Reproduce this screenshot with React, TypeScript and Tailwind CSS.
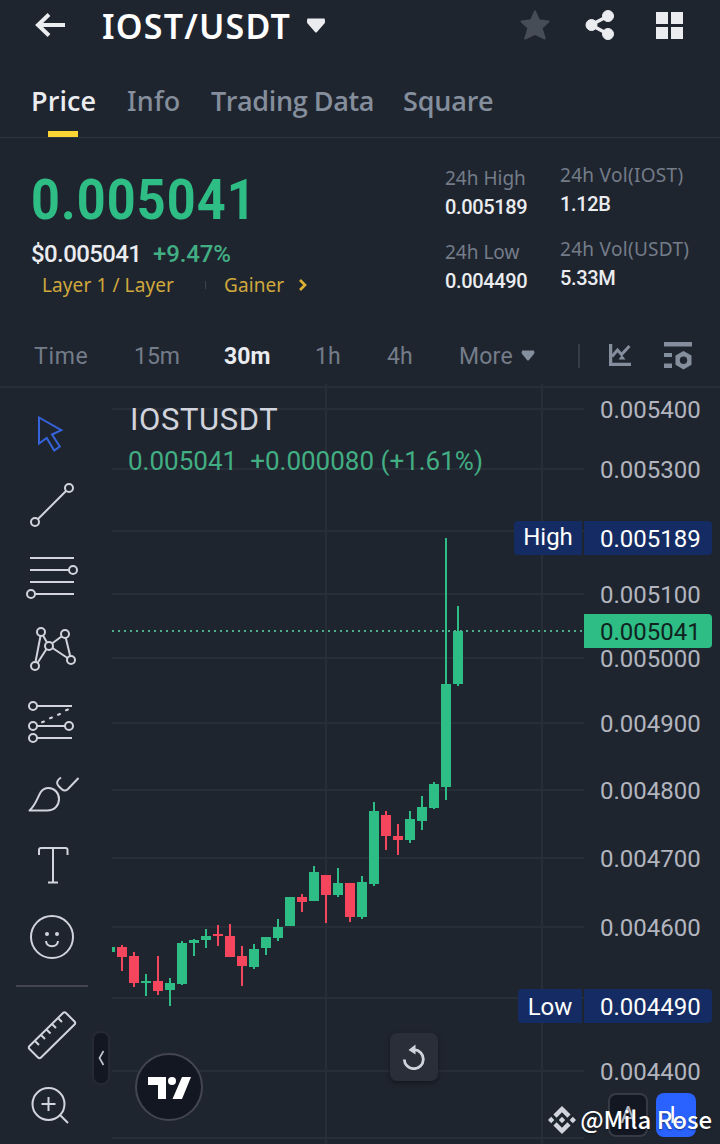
import type { ReactNode } from "react";
import { SiBinance } from "react-icons/si";

const GREEN = "#2ebd85";
const RED = "#f6465d";

// [center x, wick top, wick bottom, body top, body bottom, rising]
const candles: [number, number, number, number, number, boolean][] = [
  [110, 947, 952, 947, 952, true],
  [122, 945, 971, 947, 957, false],
  [134, 952, 987, 956, 983, false],
  [146, 974, 996, 981, 983, true],
  [158, 956, 995, 981, 991, false],
  [170, 978, 1006, 983, 990, true],
  [182, 941, 985, 943, 984, true],
  [194, 939, 956, 940, 943, true],
  [206, 929, 948, 936, 940, true],
  [218, 925, 946, 934, 936, false],
  [230, 924, 957, 936, 957, false],
  [242, 946, 986, 956, 966, false],
  [254, 944, 969, 949, 967, true],
  [266, 937, 955, 937, 948, true],
  [278, 919, 941, 927, 938, true],
  [290, 897, 926, 897, 926, true],
  [302, 894, 912, 897, 902, false],
  [314, 866, 901, 872, 901, true],
  [326, 875, 923, 875, 895, false],
  [338, 868, 897, 883, 895, true],
  [350, 883, 922, 883, 917, false],
  [362, 876, 919, 882, 917, true],
  [374, 802, 886, 811, 884, true],
  [386, 811, 850, 815, 836, false],
  [398, 824, 855, 836, 840, false],
  [410, 811, 843, 819, 840, true],
  [422, 796, 830, 807, 821, true],
  [434, 782, 809, 784, 808, true],
  [446, 538, 800, 684, 787, true],
  [458, 606, 686, 631, 684, true],
];

const gridLines = [409, 469, 531, 594, 658, 723, 790, 858, 927, 998, 1071, 1138];

const axisLabels: [string, number][] = [
  ["0.005400", 409],
  ["0.005300", 469],
  ["0.005100", 594],
  ["0.005000", 658],
  ["0.004900", 723],
  ["0.004800", 790],
  ["0.004700", 858],
  ["0.004600", 927],
  ["0.004400", 1071],
];

function Tool({ children, className = "text-[#d1d4dc]" }: { children: ReactNode; className?: string }) {
  return (
    <button className={`flex h-[72px] w-[104px] items-center justify-center ${className}`}>
      <svg
        viewBox="0 0 56 56"
        className="h-14 w-14"
        fill="none"
        stroke="currentColor"
        strokeWidth="2"
      >
        {children}
      </svg>
    </button>
  );
}

function Toolbar() {
  return (
    <div className="relative flex w-[112px] shrink-0 flex-col pt-[9px]">
      <Tool className="text-[#3564dc]">
        <path d="M15 12.500 37.300 25.200 28 29.500l7.800 12-5.600 4-7.500-12.500L15 38.500Z" />
      </Tool>
      <Tool>
        <path d="M14 42 42 14" />
        <circle cx="45" cy="11" r="4" />
        <circle cx="11" cy="45" r="4" />
      </Tool>
      <Tool>
        <path d="M6 9h44M6 21h39M6 33h44M11 45h39" />
        <circle cx="49" cy="21" r="4" />
        <circle cx="7" cy="45" r="4" />
      </Tool>
      <Tool>
        <path d="m19 14.500 4 7M28 22.500l9.500-7M16.500 15l-5 26M13.500 42l9-14M28.500 27l15 10M41.800 17l4.400 18" />
        <circle cx="17" cy="11" r="4" />
        <circle cx="41" cy="13" r="4" />
        <circle cx="25" cy="25" r="4" />
        <circle cx="11" cy="45" r="4" />
        <circle cx="47" cy="39" r="4" />
      </Tool>
      <Tool>
        <path d="M13 13h35M13 33h28M13 45h35" />
        <circle cx="9" cy="13" r="4" />
        <circle cx="9" cy="33" r="4" />
        <circle cx="45" cy="33" r="4" />
        <circle cx="9" cy="45" r="4" />
        <path d="M18 29.300l2-.8M26 25.300l2-.8M34 21.800l2-.8M42 17.300l2-.8" strokeLinecap="round" />
      </Tool>
      <Tool>
        <path d="M5.500 45.500c6.500-6 7.500-12 11-18 2-3.200 5-4.500 8-4.500 6 0 10.500 5 10.500 11s-4 11.500-12 11.500Z" strokeLinejoin="round" />
        <path d="M37 12.500c-4.200 2.700-5 6-2.500 8.500l3.500 3.400c2 1.600 3.500 1.600 5.500.1L54.500 13" />
      </Tool>
      <Tool>
        <path d="M15 18v-5q0-2 2-2h24.500q2 0 2 2v5M29 11v34M24 45.500h10" />
      </Tool>
      <Tool>
        <circle cx="28" cy="28" r="21" />
        <circle cx="23" cy="25" r="2" fill="currentColor" stroke="none" />
        <circle cx="33" cy="25" r="2" fill="currentColor" stroke="none" />
        <path d="M22 32c.8 7 11.200 7 12 0" />
      </Tool>
      <div className="flex h-[25px] items-center pt-px pl-4">
        <div className="h-0.5 w-[72px] bg-[#434651]" />
      </div>
      <Tool>
        <path
          d="M39 7q1.500-1.500 3 0L50.500 15.500q1.500 1.500 0 3L17 51.500q-1.500 1.500-3 0L5.500 43q-1.500-1.500 0-3ZM11 35l4 4M17 29l4 4M22.500 23.500l4 4M28 18l4 4M34 12l4 4"
          strokeLinejoin="round"
        />
      </Tool>
      <Tool>
        <circle cx="24.500" cy="26" r="16" />
        <path d="M17.500 26h14M24.500 19v14M36 37l8 8" />
      </Tool>
      <button className="absolute top-[643px] left-[92px] flex h-[54px] w-[18px] items-center justify-center rounded-[8px] border-2 border-[#252a35] bg-[#131722]">
        <svg viewBox="0 0 8 16" className="h-4 w-2" fill="none" stroke="#c0c3cb" strokeWidth="1.700">
          <path d="M6.500 1 2.500 8l4 7" />
        </svg>
      </button>
    </div>
  );
}

function Plot() {
  return (
    <div className="relative h-[756px] w-[472px] shrink-0 font-[Roboto,sans-serif]">
      <svg viewBox="112 388 472 756" className="block h-[756px] w-[472px] overflow-visible" shapeRendering="crispEdges">
        {gridLines.map((y) => (
          <rect key={y} x="112" y={y - 1} width="472" height="2" fill="#282e38" />
        ))}
        <rect x="325" y="384" width="2" height="760" fill="#282e38" />
        <rect x="541" y="384" width="2" height="760" fill="#282e38" />
        {candles.map(([x, wt, wb, bt, bb, up]) => {
          const left = Math.max(x - 5, 112);
          return (
            <g key={x} fill={up ? GREEN : RED}>
              {x > 112 && <rect x={x - 1} y={wt} width="2" height={wb - wt} />}
              <rect x={left} y={bt} width={x + 5 - left} height={bb - bt} />
            </g>
          );
        })}
        <path d="M112 631H584" stroke="#4fae8c" strokeWidth="2" strokeDasharray="2 4" />
      </svg>
      <div className="absolute top-[14px] left-[18px] text-[31px] leading-9 tracking-[0.6px] whitespace-nowrap text-[#d1d4dc]">
        IOSTUSDT
      </div>
      <div className="absolute top-[58px] left-4 flex gap-[13px] text-[26px] leading-[30px] whitespace-nowrap text-[#42ae83]">
        <span>0.005041</span>
        <span>+0.000080 (+1.61%)</span>
      </div>
      <div className="absolute top-[133px] left-[402px] h-[34px] w-[68px] rounded-l-[4px] bg-[#142c63] text-center text-2xl leading-8 text-white">
        High
      </div>
      <div className="absolute top-[601px] left-[406px] h-[34px] w-[64px] rounded-l-[4px] bg-[#142c63] text-center text-2xl leading-[36px] text-white">
        Low
      </div>
      <button className="absolute top-[645px] left-[278px] flex h-12 w-12 items-center justify-center rounded-[7px] bg-[#2a2e39] shadow-[0_2px_5px_rgba(0,0,0,0.4)]">
        <svg viewBox="0 0 24 26" className="h-[26px] w-6" fill="none" stroke="#d1d4dc" strokeWidth="2.800">
          <path d="M2.300 15.500a9.500 9.500 0 1 0 10-9.800" />
          <path d="M6.500 6 13.500.5v10Z" fill="#d1d4dc" stroke="none" />
        </svg>
      </button>
      <div className="absolute top-[665px] left-[23px] h-[68px] w-[68px] rounded-full border-2 border-[#434651] bg-[#131722]">
        <svg viewBox="137 1055 64 64" className="h-16 w-16" fill="#fff">
          <path d="M148 1077h18v22h-8v-14h-10ZM182 1077h9l-9 22h-9.500Z" />
          <circle cx="172" cy="1081" r="4" />
        </svg>
      </div>
    </div>
  );
}

function PriceAxis() {
  return (
    <div className="relative h-[756px] w-[136px] shrink-0 font-[Roboto,sans-serif] text-2xl">
      {axisLabels.map(([label, y]) => (
        <div key={label} className="absolute left-4 leading-8 text-[#b2b5be]" style={{ top: y - 388 - 15 }}>
          {label}
        </div>
      ))}
      <div className="absolute top-[133px] left-0 h-[34px] w-32 rounded-r-[4px] bg-[#142c63] pl-4 leading-[36px] text-white">
        0.005189
      </div>
      <div className="absolute top-[226px] left-0 h-[34px] w-32 rounded-r-[4px] bg-[#2ebd85] pl-4 leading-[36px] text-[#10231f]">
        0.005041
      </div>
      <div className="absolute top-[601px] left-0 h-[34px] w-32 rounded-r-[4px] bg-[#142c63] pl-4 leading-[36px] text-white">
        0.004490
      </div>
      <div className="absolute top-[705px] left-6 flex gap-2">
        <button className="h-11 w-10 rounded-[8px] border-2 border-[#363a45] bg-[#131722] leading-[38px] text-[#b2b5be]">
          A
        </button>
        <button className="h-11 w-10 rounded-[8px] bg-[#2962ff] leading-[42px] text-white">L</button>
      </div>
    </div>
  );
}

function Header() {
  return (
    <header className="flex h-[50px] items-center pl-[35px]">
      <svg viewBox="0 0 30 24" className="h-6 w-[30px] shrink-0" fill="none" stroke="#eaecef" strokeWidth="4">
        <path d="M30 12H3M14 1.500 3 12l11 10.500" />
      </svg>
      <h1 className="ml-[37px] w-[189px] pt-[2px] font-['Noto_Sans',sans-serif] text-[34px] leading-[50px] font-semibold tracking-[1.200px] whitespace-nowrap text-white">
        IOST/USDT
      </h1>
      <svg viewBox="0 0 20 15" className="ml-[15px] h-[15px] w-5" fill="#eaecef">
        <path d="M1.500 0.500h17q1.500 4-1 6L11 14q-1 1-2 0L2.500 6.500q-2.500-2-1-6Z" />
      </svg>
      <svg viewBox="0 0 30 30" className="ml-[194px] h-[30px] w-[30px]" fill="#474d57" stroke="#474d57" strokeWidth="2" strokeLinejoin="round">
        <path d="m15 1.500 4 8.800 9.500 1.200-7 6.600 3.300 10.400L15 23.800 5.200 28.500l3.300-10.400-7-6.600 9.500-1.200Z" />
      </svg>
      <svg viewBox="0 0 30 30" className="ml-[34.500px] h-[30px] w-[30px]" fill="#eaecef" stroke="#eaecef">
        <path d="M23 6 6 15l17 9" fill="none" strokeWidth="3.500" />
        <circle cx="23" cy="6" r="5.500" />
        <circle cx="6.500" cy="15" r="5.500" />
        <circle cx="23" cy="24" r="5.500" />
      </svg>
      <div className="ml-[41.500px] grid grid-cols-2 gap-[3px]">
        <span className="h-3 w-3 bg-[#eaecef]" />
        <span className="h-3 w-3 bg-[#eaecef]" />
        <span className="h-3 w-3 bg-[#eaecef]" />
        <span className="h-3 w-3 bg-[#eaecef]" />
      </div>
    </header>
  );
}

function Tabs() {
  return (
    <nav className="flex h-[88px] border-b border-[#2f3640] pl-[31px] font-['Open_Sans',sans-serif] text-[27px] leading-[102px] font-semibold whitespace-nowrap text-[#848e9c]">
      <div className="relative w-[96px] text-[#eaecef]">
        <span className="tracking-[0.1px]">Price</span>
        <span className="absolute bottom-0 left-[17px] h-1.5 w-[30px] bg-[#fcd535]" />
      </div>
      <div className="w-[84px] font-['Noto_Sans',sans-serif] font-medium tracking-[0.2px]">Info</div>
      <div className="w-[192px] tracking-[-0.400px]">Trading Data</div>
      <div className="tracking-[-0.200px]">Square</div>
    </nav>
  );
}

function Stat({ label, value }: { label: string; value: string }) {
  return (
    <div className="h-[74px] whitespace-nowrap">
      <div className="font-['Noto_Sans',sans-serif] text-[19px] leading-[30px] text-[#747c89]">{label}</div>
      <div className="font-[Roboto,sans-serif] text-xl leading-[29px] font-medium tracking-[-0.350px] text-[#eaecef]">
        {value}
      </div>
    </div>
  );
}

function Summary() {
  return (
    <section className="flex h-[188px] whitespace-nowrap">
      <div className="w-[414px] pl-[31px] font-[Roboto,sans-serif]">
        <div className="mt-[32px] h-[64px] origin-left scale-x-90 text-[56px] leading-[61px] font-bold tracking-[1.200px] text-[#2ebd85]">
          0.005041
        </div>
        <div className="flex h-[38px] gap-3 text-2xl leading-[40px] font-medium">
          <span className="w-[110px] tracking-[-0.600px] text-[#eaecef]">$0.005041</span>
          <span className="tracking-[-0.150px] text-[#42ae83]">+9.47%</span>
        </div>
        <div className="flex h-[26px] items-center pl-[11px] font-['Noto_Sans',sans-serif] text-[19px] leading-6 tracking-[0.1px] text-[#d0a83c]">
          <span className="w-[163px]">Layer 1 / Layer</span>
          <span className="h-2 w-px bg-[#3b424d]" />
          <span className="ml-[18px] w-[74px]">Gainer</span>
          <svg viewBox="0 0 10 12" className="h-3 w-2.5" fill="none" stroke="#e0b233" strokeWidth="2.600">
            <path d="M2 1l5 5-5 5" />
          </svg>
        </div>
      </div>
      <div className="w-[115px] pt-[25px] pl-[31px]">
        <Stat label="24h High" value="0.005189" />
        <Stat label="24h Low" value="0.004490" />
      </div>
      <div className="pt-[22px] pl-[31px] tracking-[0.300px]">
        <Stat label="24h Vol(IOST)" value="1.12B" />
        <Stat label="24h Vol(USDT)" value="5.33M" />
      </div>
    </section>
  );
}

function Intervals() {
  return (
    <div className="flex h-[62px] items-center border-b-2 border-[#282e38] pl-[34px] font-[Roboto,sans-serif] text-[23px] whitespace-nowrap text-[#747c89]">
      <div className="flex pt-[3px]">
        <span className="w-[100px] tracking-[0.700px]">Time</span>
        <span className="w-[90px]">15m</span>
        <span className="w-[91px] font-bold text-[#eaecef]">30m</span>
        <span className="w-[72px]">1h</span>
        <span className="w-[72px]">4h</span>
        <span className="w-[62px] tracking-[0.2px]">More</span>
      </div>
      <svg viewBox="0 0 14 11" className="mb-0.5 h-[11px] w-3.5" fill="#848e9c">
        <path d="M1 .5h12q1 2-.5 4L8 10q-1 1-2 0L1.500 4.500Q0 2.500 1 .5Z" />
      </svg>
      <span className="ml-[43px] h-6 w-0.5 bg-[#363d48]" />
      <svg viewBox="0 0 22 22" className="mb-0.5 ml-[29px] h-[22px] w-[22px]" fill="none" stroke="#848e9c" strokeWidth="3">
        <path d="M1.500 0v20.500H22" strokeWidth="3.500" />
        <path d="M3 12.500 8.500 6l4 4.500L20.500 2" />
        <path d="m13 11 3.500 4.500h-7Z" fill="#848e9c" stroke="none" />
      </svg>
      <svg viewBox="0 0 28 28" className="ml-[33px] h-7 w-7" fill="#848e9c">
        <path d="M0 0h28v4.500H0ZM0 11h8v4H0ZM0 21.500h8v4.500H0Z" />
        <path
          fillRule="evenodd"
          d="m19.500 9 8 4.600v9.200l-8 4.700-8-4.700v-9.200Zm0 5.500a3.700 3.700 0 1 0 0 7.400 3.700 3.700 0 0 0 0-7.400Z"
        />
      </svg>
    </div>
  );
}

export default function App() {
  return (
    <main className="relative flex h-[1144px] w-[720px] flex-col overflow-hidden bg-[#1f252f]">
      <Header />
      <Tabs />
      <Summary />
      <Intervals />
      <section className="flex h-[756px]">
        <Toolbar />
        <Plot />
        <PriceAxis />
      </section>
      <div className="absolute right-2 bottom-1 flex h-10 items-center gap-1 whitespace-nowrap text-white">
        <SiBinance className="h-7 w-7 text-[#d1d4dc]" />
        <span className="pb-0.5 font-['Noto_Sans_CJK_SC',sans-serif] text-2xl font-medium [text-shadow:0_1px_2px_rgba(0,0,0,0.5)]">
          @Mila Rose
        </span>
      </div>
    </main>
  );
}
